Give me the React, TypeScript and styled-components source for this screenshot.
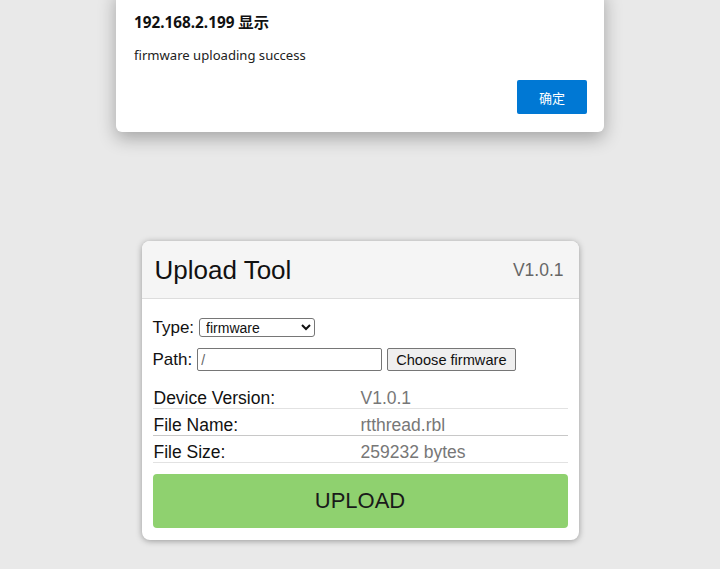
import React from 'react';
import styled, { createGlobalStyle } from 'styled-components';

const GlobalStyle = createGlobalStyle`
  html, body { margin: 0; padding: 0; background: #e9e9e9; }
  body { font-family: "Liberation Sans", Arial, sans-serif; }
`;

const Page = styled.div`
  position: relative;
  width: 720px;
  height: 569px;
  overflow: hidden;
  display: flex;
  justify-content: center;
  align-items: flex-start;
  padding-top: 241px;
  box-sizing: border-box;
`;

// alert dialog laid over the page
const Dialog = styled.div`
  position: absolute;
  top: -10px;
  left: 116px;
  width: 488px;
  height: 142px;
  box-sizing: border-box;
  padding: 22px 17px 0 18px;
  background: #fff;
  border-radius: 0 0 6px 6px;
  box-shadow: 0 6px 18px rgba(0, 0, 0, 0.3);
  font-family: "Noto Sans", "Noto Sans CJK SC", sans-serif;
  display: flex;
  flex-direction: column;
`;

const DialogTitle = styled.div`
  font-size: 15.3px;
  font-weight: 700;
  color: #111;
  line-height: 20px;
`;

const DialogMessage = styled.div`
  margin-top: 14px;
  font-size: 13.1px;
  color: #222;
  line-height: 18px;
`;

const DialogActions = styled.div`
  display: flex;
  justify-content: flex-end;
  margin-top: 16px;
`;

const OkButton = styled.button`
  width: 70px;
  height: 34px;
  border: none;
  border-radius: 2px;
  background: #0078d4;
  color: #fff;
  font-family: "Noto Sans CJK SC", sans-serif;
  font-size: 13px;
`;

const Card = styled.div`
  width: 437px;
  background: #fff;
  border-radius: 8px;
  box-shadow: 0 1px 6px rgba(0, 0, 0, 0.35);
  overflow: hidden;
`;

const CardHeader = styled.div`
  height: 58px;
  box-sizing: border-box;
  background: #f5f5f5;
  border-bottom: 1px solid #ddd;
  display: flex;
  align-items: center;
  justify-content: space-between;
  padding: 2px 15px 0 13px;
`;

const Title = styled.h1`
  margin: 0;
  font-size: 26px;
  font-weight: 400;
  color: #111;
`;

const Version = styled.span`
  font-size: 17.5px;
  color: #666;
`;

const CardBody = styled.div`
  padding: 19px 11px 12px 11px;
`;

const FieldRow = styled.div<{ $h: number }>`
  display: flex;
  align-items: center;
  gap: 5px;
  height: ${(p) => p.$h}px;
  font-size: 17px;
  color: #111;
  margin-bottom: 11px;
`;

const Select = styled.select`
  width: 116px;
  height: 19px;
  font-family: "Liberation Sans", Arial, sans-serif;
  font-size: 14px;
  padding: 0 2px;
  border: 1px solid #767676;
  border-radius: 3px;
  background: #fff;
  color: #111;
`;

const PathInput = styled.input`
  width: 185px;
  height: 23px;
  box-sizing: border-box;
  font-family: "Liberation Sans", Arial, sans-serif;
  font-size: 14px;
  padding: 0 3px;
  border: 1px solid #767676;
  border-radius: 2px;
  color: #666;
`;

const FileButton = styled.button`
  height: 23px;
  padding: 0 8px;
  font-family: "Liberation Sans", Arial, sans-serif;
  font-size: 14.6px;
  color: #111;
  background: #efefef;
  border: 1px solid #767676;
  border-radius: 2px;
`;

const InfoTable = styled.div`
  margin-top: 2px;
  display: flex;
  flex-direction: column;
`;

const InfoRow = styled.div<{ $strong?: boolean }>`
  display: grid;
  grid-template-columns: 207px 1fr;
  height: 26px;
  align-items: end;
  line-height: 20px;
  font-size: 17.5px;
  border-bottom: 1px solid ${(p) => (p.$strong ? '#c8c8c8' : '#e2e2e2')};
  padding-left: 1px;
`;

const InfoLabel = styled.span`
  color: #111;
`;

const InfoValue = styled.span`
  color: #777;
`;

const UploadButton = styled.button`
  width: 100%;
  height: 54px;
  margin-top: 11px;
  border: none;
  border-radius: 4px;
  background: #8fd16f;
  color: #1a1a1a;
  font-family: "Liberation Sans", Arial, sans-serif;
  font-size: 22px;
`;

const info = [
  { label: 'Device Version:', value: 'V1.0.1' },
  { label: 'File Name:', value: 'rtthread.rbl', strong: true },
  { label: 'File Size:', value: '259232 bytes' },
];

export default function App() {
  return (
    <>
      <GlobalStyle />
      <Page>
        <Card>
          <CardHeader>
            <Title>Upload Tool</Title>
            <Version>V1.0.1</Version>
          </CardHeader>
          <CardBody>
            <FieldRow $h={19}>
              Type:
              <Select defaultValue="firmware">
                <option value="firmware">firmware</option>
              </Select>
            </FieldRow>
            <FieldRow $h={23}>
              Path:
              <PathInput defaultValue="/" />
              <FileButton>Choose firmware</FileButton>
            </FieldRow>
            <InfoTable>
              {info.map((row) => (
                <InfoRow key={row.label} $strong={row.strong}>
                  <InfoLabel>{row.label}</InfoLabel>
                  <InfoValue>{row.value}</InfoValue>
                </InfoRow>
              ))}
            </InfoTable>
            <UploadButton>UPLOAD</UploadButton>
          </CardBody>
        </Card>
        <Dialog>
          <DialogTitle>192.168.2.199 显示</DialogTitle>
          <DialogMessage>firmware uploading success</DialogMessage>
          <DialogActions>
            <OkButton>确定</OkButton>
          </DialogActions>
        </Dialog>
      </Page>
    </>
  );
}
